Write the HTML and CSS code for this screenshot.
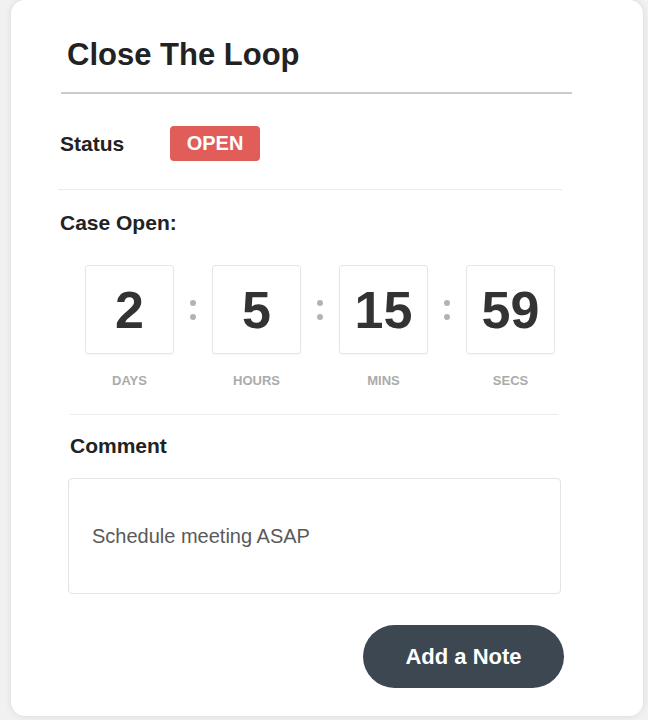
FILE: index.html
```html
<!DOCTYPE html>
<html lang="en">
<head>
<meta charset="utf-8">
<title>Close The Loop</title>
<link rel="stylesheet" href="styles.css">
</head>
<body>
  <div class="card">
    <h1 class="title">Close The Loop</h1>
    <div class="rule-strong"></div>

    <div class="status-row">
      <span class="label status-label">Status</span>
      <span class="badge">OPEN</span>
    </div>
    <div class="rule-light"></div>

    <div class="label case-label">Case Open:</div>
    <div class="countdown">
      <div class="unit">
        <div class="box">2</div>
        <div class="unit-label">DAYS</div>
      </div>
      <div class="sep"><span class="dot"></span><span class="dot"></span></div>
      <div class="unit">
        <div class="box">5</div>
        <div class="unit-label">HOURS</div>
      </div>
      <div class="sep"><span class="dot"></span><span class="dot"></span></div>
      <div class="unit">
        <div class="box">15</div>
        <div class="unit-label">MINS</div>
      </div>
      <div class="sep"><span class="dot"></span><span class="dot"></span></div>
      <div class="unit">
        <div class="box">59</div>
        <div class="unit-label">SECS</div>
      </div>
    </div>
    <div class="rule-light rule-comment"></div>

    <div class="label comment-label">Comment</div>
    <div class="comment-box">Schedule meeting ASAP</div>

    <div class="actions">
      <button class="btn" type="button">Add a Note</button>
    </div>
  </div>
</body>
</html>
```

FILE: styles.css
```css
* {
  box-sizing: border-box;
}

html, body {
  margin: 0;
  padding: 0;
}

body {
  background: #f1f1f1;
  font-family: "Liberation Sans", Arial, Helvetica, sans-serif;
  color: #222;
  width: 648px;
  height: 720px;
  overflow: hidden;
}

.card {
  margin-left: 11px;
  width: 632px;
  height: 716px;
  background: #fff;
  border-radius: 14px;
  box-shadow: 0 0 7px rgba(0, 0, 0, 0.10);
  padding-top: 37px;
  display: flex;
  flex-direction: column;
  align-items: flex-start;
}

.title {
  margin: 0 0 0 56px;
  font-size: 31px;
  line-height: 36px;
  font-weight: 700;
  color: #222;
}

.rule-strong {
  margin: 19px 0 0 50px;
  width: 511px;
  height: 2px;
  background: #cbcbcb;
}

.status-row {
  margin: 32px 0 0 49px;
  display: flex;
  align-items: center;
  height: 35px;
}

.label {
  font-size: 21px;
  line-height: 24px;
  font-weight: 700;
  color: #222;
}

.status-label {
  width: 110px;
}

.badge {
  width: 90px;
  height: 35px;
  border-radius: 4px;
  background: #e15d5a;
  color: #fff;
  font-size: 20px;
  font-weight: 700;
  display: flex;
  align-items: center;
  justify-content: center;
}

.rule-light {
  margin: 28px 0 0 47px;
  width: 504px;
  height: 1px;
  background: #ececec;
}

.case-label {
  margin: 21px 0 0 49px;
}

.countdown {
  margin: 30px 0 0 74px;
  display: flex;
  align-items: flex-start;
}

.unit {
  width: 89px;
  display: flex;
  flex-direction: column;
  align-items: center;
}

.box {
  width: 89px;
  height: 89px;
  border: 1px solid #e6e6e6;
  border-radius: 3px;
  box-shadow: 0 1px 2px rgba(0, 0, 0, 0.04);
  display: flex;
  align-items: center;
  justify-content: center;
  font-size: 52px;
  font-weight: 700;
  color: #333;
}

.unit-label {
  margin-top: 19px;
  font-size: 13px;
  line-height: 16px;
  font-weight: 700;
  color: #ababab;
}

.sep {
  width: 38px;
  height: 89px;
  display: flex;
  flex-direction: column;
  align-items: center;
  justify-content: center;
  gap: 8px;
}

.dot {
  width: 6px;
  height: 6px;
  border-radius: 50%;
  background: #b3b3b3;
}

.rule-comment {
  margin: 25px 0 0 59px;
  width: 488px;
}

.comment-label {
  margin: 19px 0 0 59px;
}

.comment-box {
  margin: 20px 0 0 57px;
  width: 493px;
  height: 116px;
  border: 1px solid #e3e3e3;
  border-radius: 4px;
  padding-left: 23px;
  display: flex;
  align-items: center;
  font-size: 20px;
  color: #5a5a5a;
}

.actions {
  margin: 31px 0 0 352px;
}

.btn {
  width: 201px;
  height: 63px;
  border: none;
  border-radius: 32px;
  background: #3c4752;
  color: #fff;
  font-family: "Liberation Sans", Arial, Helvetica, sans-serif;
  font-size: 22px;
  font-weight: 700;
  padding: 0;
  cursor: pointer;
}
```
